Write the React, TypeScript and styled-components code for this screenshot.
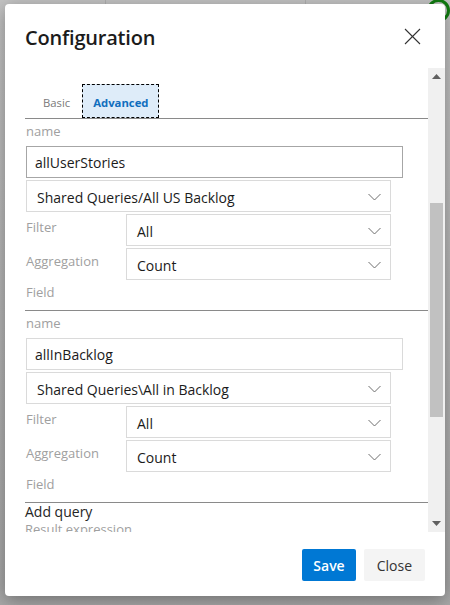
import React from "react";
import styled, { createGlobalStyle } from "styled-components";

const GlobalStyle = createGlobalStyle`
  html, body {
    margin: 0;
    padding: 0;
    width: 450px;
    height: 605px;
    overflow: hidden;
    background: #bdbdbd;
    font-family: "Segoe UI", "Open Sans", "Noto Sans", sans-serif;
  }
`;

const Page = styled.div`
  position: relative;
  width: 450px;
  height: 605px;
  padding: 4px 5px 0;
  box-sizing: border-box;
  background: linear-gradient(#c4c4c4, #a8a8a8);
  overflow: hidden;
`;

const PageLine = styled.div<{ $left: number }>`
  position: absolute;
  top: 0;
  left: ${(p) => p.$left}px;
  width: 1px;
  height: 10px;
  background: #b0b0b0;
`;

const StatusRing = styled.div`
  position: absolute;
  top: -1px;
  left: 427px;
  width: 17px;
  height: 17px;
  border: 3px solid #107c10;
  border-radius: 50%;
`;

const Dialog = styled.div`
  position: relative;
  width: 440px;
  height: 592px;
  background: #fff;
  border-radius: 4px;
  box-shadow: 0 4px 18px rgba(0, 0, 0, 0.35);
  display: flex;
  flex-direction: column;
  overflow: hidden;
`;

const Header = styled.div`
  height: 64px;
  box-sizing: border-box;
  padding: 20px 20px 0 20px;
  display: flex;
  justify-content: space-between;
  align-items: flex-start;
`;

const Title = styled.h1`
  margin: 0;
  font-size: 20px;
  line-height: 28px;
  font-weight: 600;
  color: #1b1b1b;
  letter-spacing: -0.2px;
`;

const CloseIcon = styled.button`
  margin: 4px 4px 0 0;
  padding: 0;
  border: none;
  background: none;
  width: 17px;
  height: 17px;
  display: flex;
`;

const Body = styled.div`
  height: 464px;
  display: flex;
  flex-direction: row;
`;

const Scroller = styled.div`
  flex: 1;
  overflow: hidden;
  padding-left: 20px;
`;

const TabList = styled.div`
  margin-top: 16px;
  display: flex;
  padding-left: 9px;
  gap: 3px;
  border-bottom: 1px solid #8a8a8a;
`;

const Tab = styled.div<{ $active?: boolean }>`
  height: 34px;
  box-sizing: border-box;
  padding: 3px ${(p) => (p.$active ? 10 : 8)}px 0;
  display: flex;
  align-items: center;
  font-size: 11.3px;
  font-weight: ${(p) => (p.$active ? 700 : 400)};
  color: ${(p) => (p.$active ? "#106ebe" : "#7a7a7a")};
  background: ${(p) => (p.$active ? "#deecf9" : "transparent")};
  border: 1px dashed ${(p) => (p.$active ? "#000" : "transparent")};
`;

const Group = styled.div`
  padding-bottom: 9px;
  border-bottom: 1px solid #8a8a8a;
`;

const Label = styled.div<{ $gap?: number }>`
  font-size: 13px;
  line-height: 18px;
  color: #a0a0a0;
  padding-top: ${(p) => p.$gap ?? 3}px;
  margin-left: 1px;
`;

const TextInput = styled.div<{ $focused?: boolean }>`
  margin: 6px 0 0 1px;
  width: 377px;
  height: 32px;
  box-sizing: border-box;
  border: 1px solid ${(p) => (p.$focused ? "#a6a6a6" : "#dadada")};
  padding: 0 8px;
  display: flex;
  align-items: center;
  font-size: 14px;
  color: #1b1b1b;
`;

const Select = styled.div<{ $width: number }>`
  width: ${(p) => p.$width}px;
  height: 32px;
  box-sizing: border-box;
  border: 1px solid #dadada;
  padding: 2px 9px 0 10px;
  display: flex;
  align-items: center;
  justify-content: space-between;
  font-size: 14px;
  color: #1b1b1b;
`;

const QueryRow = styled.div`
  margin: 2px 0 0 1px;
`;

const FieldRow = styled.div`
  margin: 2px 0 0 1px;
  display: flex;
  align-items: flex-start;
`;

const FieldLabel = styled.div`
  width: 100px;
  font-size: 13px;
  line-height: 18px;
  color: #a0a0a0;
  padding-top: 4px;
`;

const AddQuery = styled.div`
  font-size: 14px;
  line-height: 18px;
  color: #252525;
`;

const Hint = styled.div`
  font-size: 13px;
  line-height: 16px;
  color: #a0a0a0;
`;

const ScrollBar = styled.div`
  width: 17px;
  background: #f0f0f0;
  display: flex;
  flex-direction: column;
  align-items: center;
`;

const Arrow = styled.div`
  height: 17px;
  width: 17px;
  display: flex;
  align-items: center;
  justify-content: center;
`;

const Track = styled.div`
  flex: 1;
  width: 100%;
  display: flex;
  flex-direction: column;
  align-items: center;
`;

const Thumb = styled.div`
  margin-top: 118px;
  width: 13px;
  height: 214px;
  background: #c1c1c1;
`;

const Footer = styled.div`
  height: 64px;
  box-sizing: border-box;
  padding: 17px 20px 15px;
  display: flex;
  justify-content: flex-end;
  gap: 8px;
`;

const Button = styled.button<{ $primary?: boolean }>`
  height: 32px;
  padding: 0 ${(p) => (p.$primary ? 11 : 13)}px;
  border: none;
  border-radius: 2px;
  font-family: inherit;
  font-size: 14px;
  font-weight: ${(p) => (p.$primary ? 600 : 400)};
  background: ${(p) => (p.$primary ? "#0078d4" : "#f4f4f4")};
  color: ${(p) => (p.$primary ? "#fff" : "#333")};
`;

const Chevron = () => (
  <svg width="13" height="8" viewBox="0 0 13 8">
    <polyline points="0.5,1 6.5,7 12.5,1" fill="none" stroke="#6f6f6f" strokeWidth="1" />
  </svg>
);

const Triangle = ({ up }: { up?: boolean }) => (
  <svg width="9" height="5" viewBox="0 0 9 5">
    <polygon points={up ? "0,5 4.5,0 9,5" : "0,0 9,0 4.5,5"} fill="#606060" />
  </svg>
);

type QueryProps = {
  name: string;
  query: string;
  focused?: boolean;
};

const QueryGroup: React.FC<QueryProps> = ({ name, query, focused }) => (
  <Group>
    <Label>name</Label>
    <TextInput $focused={focused}>{name}</TextInput>
    <QueryRow>
      <Select $width={365}>
        {query}
        <Chevron />
      </Select>
    </QueryRow>
    <FieldRow>
      <FieldLabel>Filter</FieldLabel>
      <Select $width={265}>
        All
        <Chevron />
      </Select>
    </FieldRow>
    <FieldRow>
      <FieldLabel>Aggregation</FieldLabel>
      <Select $width={265}>
        Count
        <Chevron />
      </Select>
    </FieldRow>
    <Label $gap={3}>Field</Label>
  </Group>
);

const App: React.FC = () => {
  return (
    <>
      <GlobalStyle />
      <Page>
        <PageLine $left={105} />
        <PageLine $left={305} />
        <StatusRing />
        <Dialog>
          <Header>
            <Title>Configuration</Title>
            <CloseIcon aria-label="Close">
              <svg width="17" height="17" viewBox="0 0 17 17">
                <line x1="1" y1="1" x2="16" y2="16" stroke="#333" strokeWidth="1.1" />
                <line x1="16" y1="1" x2="1" y2="16" stroke="#333" strokeWidth="1.1" />
              </svg>
            </CloseIcon>
          </Header>
          <Body>
            <Scroller>
              <TabList>
                <Tab>Basic</Tab>
                <Tab $active>Advanced</Tab>
              </TabList>
              <QueryGroup name="allUserStories" query="Shared Queries/All US Backlog" focused />
              <QueryGroup name="allInBacklog" query="Shared Queries\All in Backlog" />
              <AddQuery>Add query</AddQuery>
              <Hint>Result expression</Hint>
            </Scroller>
            <ScrollBar>
              <Arrow>
                <Triangle up />
              </Arrow>
              <Track>
                <Thumb />
              </Track>
              <Arrow>
                <Triangle />
              </Arrow>
            </ScrollBar>
          </Body>
          <Footer>
            <Button $primary>Save</Button>
            <Button>Close</Button>
          </Footer>
        </Dialog>
      </Page>
    </>
  );
};

export default App;
